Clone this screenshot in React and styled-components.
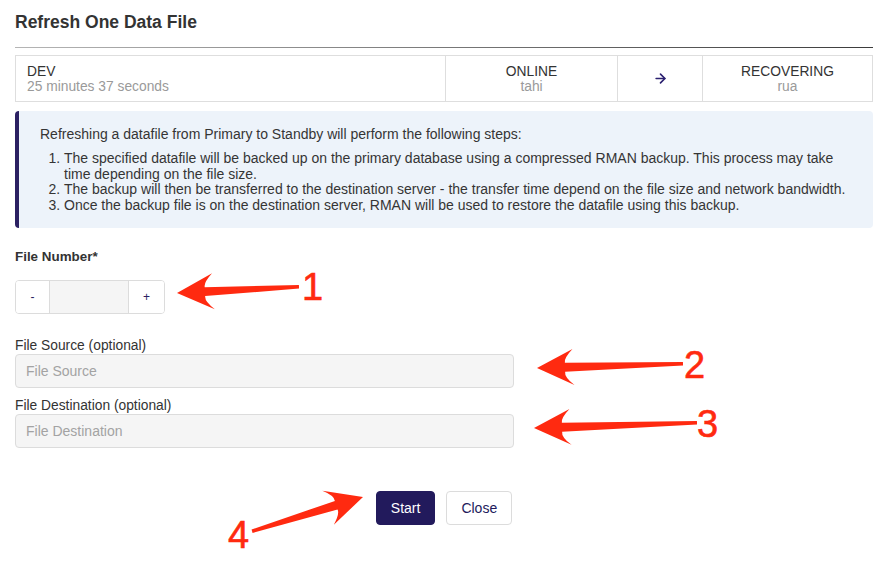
import styled, { createGlobalStyle } from "styled-components";
import { ArrowRight } from "lucide-react";

const GlobalStyle = createGlobalStyle`
  html, body {
    margin: 0;
    background: #ffffff;
  }
  body {
    font-family: "Liberation Sans", Arial, sans-serif;
    color: #333333;
  }
`;

const Page = styled.div`
  position: relative;
  width: 889px;
  height: 565px;
  box-sizing: border-box;
  padding: 12px 16px 0 15px;
`;

const Title = styled.h2`
  margin: 0 0 15px;
  font-size: 17.5px;
  line-height: 20px;
  font-weight: bold;
  color: #333;
`;

const Divider = styled.div`
  height: 1px;
  background: linear-gradient(to right, #b5b5b5, #3c3c3c);
  margin-bottom: 7px;
`;

const StatusTable = styled.div`
  display: grid;
  grid-template-columns: 429px 172px 85px 1fr;
  height: 47px;
  box-sizing: border-box;
  border: 1px solid #dedede;
`;

const StatusCell = styled.div`
  display: flex;
  flex-direction: column;
  justify-content: center;
  align-items: ${(p) => (p.$center ? "center" : "flex-start")};
  padding: 0 11px;
  border-left: ${(p) => (p.$first ? "none" : "1px solid #dedede")};
  font-size: 13.8px;
  line-height: 15px;
  color: #333;
`;

const StatusSub = styled.span`
  color: #9a9a9a;
`;

const InfoBox = styled.div`
  margin-top: 9px;
  box-sizing: border-box;
  height: 117px;
  padding: 15px 12px 0 21px;
  background: #edf3fa;
  border-left: 4px solid #2b2062;
  border-radius: 4px;
  font-size: 14px;
  line-height: 16px;
  color: #353535;
`;

const InfoText = styled.p`
  margin: 0 0 9px;
`;

const Steps = styled.ol`
  margin: 0;
  padding-left: 24px;
  padding-right: 8px;
  line-height: 15.5px;
`;

const FieldLabel = styled.div`
  margin-top: ${(p) => p.$top || 0}px;
  font-size: ${(p) => (p.$bold ? "13.4px" : "13.8px")};
  font-weight: ${(p) => (p.$bold ? "bold" : "normal")};
  line-height: 14px;
  color: #333;
`;

const Stepper = styled.div`
  display: flex;
  width: 150px;
  height: 34px;
  margin-top: 16px;
  box-sizing: border-box;
  border: 1px solid #dcdcdc;
  border-radius: 4px;
  overflow: hidden;
`;

const StepButton = styled.button`
  width: ${(p) => p.$w}px;
  border: none;
  background: #fff;
  font-family: "Liberation Sans", Arial, sans-serif;
  font-size: 12px;
  color: #2b2062;
  padding: 0;
`;

const StepInput = styled.input`
  width: 80px;
  box-sizing: border-box;
  border: none;
  border-left: 1px solid #dcdcdc;
  border-right: 1px solid #dcdcdc;
  background: #f5f5f5;
  outline: none;
`;

const TextInput = styled.input`
  display: block;
  width: 499px;
  height: 34px;
  box-sizing: border-box;
  margin-top: 1px;
  padding: 0 10px;
  border: 1px solid #dcdcdc;
  border-radius: 4px;
  background: #f5f5f5;
  font-family: "Liberation Sans", Arial, sans-serif;
  font-size: 14px;
  outline: none;

  &::placeholder {
    color: #a3a3a3;
  }
`;

const Actions = styled.div`
  display: flex;
  justify-content: center;
  gap: 11px;
  margin-top: 43px;
`;

const Button = styled.button`
  height: 34px;
  padding: 0 14px;
  border-radius: 4px;
  border: 1px solid ${(p) => (p.$primary ? "#221a5c" : "#dcdcdc")};
  background: ${(p) => (p.$primary ? "#221a5c" : "#ffffff")};
  color: ${(p) => (p.$primary ? "#ffffff" : "#221a5c")};
  font-family: "Liberation Sans", Arial, sans-serif;
  font-size: 14px;
`;

const Overlay = styled.svg`
  position: absolute;
  left: 0;
  top: 0;
  pointer-events: none;
`;

const Marker = styled.text`
  font-family: "Liberation Sans", Arial, sans-serif;
  font-size: 38px;
  fill: #ff2a10;
  stroke: #ff2a10;
  stroke-width: 0.6px;
`;

function Arrow({ x1, y1, x2, y2 }) {
  const len = Math.hypot(x2 - x1, y2 - y1);
  const angle = (Math.atan2(y1 - y2, x1 - x2) * 180) / Math.PI;
  const d = `M0,0 L36,-18 Q27,-9 28,-4.5 L${len},-2 L${len},1.5 L28,4.5 Q27,10 37,18 Z`;
  return <path d={d} fill="#ff2a10" transform={`translate(${x2} ${y2}) rotate(${angle})`} />;
}

const annotations = [
  { x1: 299, y1: 287, x2: 177, y2: 293, n: "1", nx: 302, ny: 300 },
  { x1: 683, y1: 364, x2: 537, y2: 368, n: "2", nx: 684, ny: 378 },
  { x1: 697, y1: 423, x2: 534, y2: 428, n: "3", nx: 697, ny: 437 },
  { x1: 252, y1: 531, x2: 363, y2: 497, n: "4", nx: 228, ny: 548 },
];

export default function App() {
  return (
    <>
      <GlobalStyle />
      <Page>
        <Title>Refresh One Data File</Title>
        <Divider />
        <StatusTable>
          <StatusCell $first>
            <span>DEV</span>
            <StatusSub>25 minutes 37 seconds</StatusSub>
          </StatusCell>
          <StatusCell $center>
            <span>ONLINE</span>
            <StatusSub>tahi</StatusSub>
          </StatusCell>
          <StatusCell $center>
            <ArrowRight size={15} strokeWidth={2.6} color="#2b2070" />
          </StatusCell>
          <StatusCell $center>
            <span>RECOVERING</span>
            <StatusSub>rua</StatusSub>
          </StatusCell>
        </StatusTable>

        <InfoBox>
          <InfoText>Refreshing a datafile from Primary to Standby will perform the following steps:</InfoText>
          <Steps>
            <li>
              The specified datafile will be backed up on the primary database using a compressed RMAN backup. This
              process may take time depending on the file size.
            </li>
            <li>
              The backup will then be transferred to the destination server - the transfer time depend on the file size
              and network bandwidth.
            </li>
            <li>Once the backup file is on the destination server, RMAN will be used to restore the datafile using this backup.</li>
          </Steps>
        </InfoBox>

        <FieldLabel $bold $top={22}>File Number*</FieldLabel>
        <Stepper>
          <StepButton $w={33}>-</StepButton>
          <StepInput type="text" />
          <StepButton $w={35}>+</StepButton>
        </Stepper>

        <FieldLabel $top={25}>File Source (optional)</FieldLabel>
        <TextInput placeholder="File Source" />
        <FieldLabel $top={11}>File Destination (optional)</FieldLabel>
        <TextInput placeholder="File Destination" />

        <Actions>
          <Button $primary>Start</Button>
          <Button>Close</Button>
        </Actions>

        <Overlay width="889" height="565">
          {annotations.map((a) => (
            <g key={a.n}>
              <Arrow {...a} />
              <Marker x={a.nx} y={a.ny}>{a.n}</Marker>
            </g>
          ))}
        </Overlay>
      </Page>
    </>
  );
}
